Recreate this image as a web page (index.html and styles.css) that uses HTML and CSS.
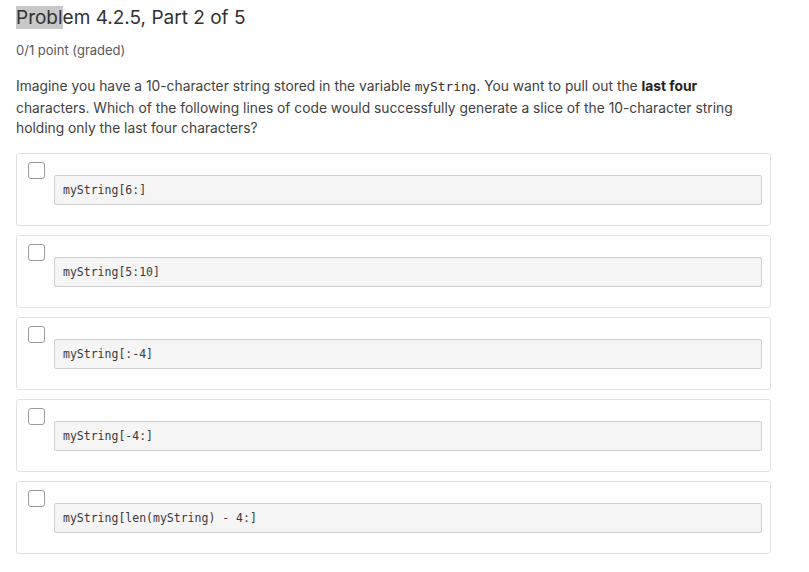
FILE: index.html
```html
<!DOCTYPE html>
<html>
<head>
<meta charset="utf-8">
<link rel="stylesheet" href="styles.css">
</head>
<body>
<div class="problem">
  <h3 class="title"><span class="sel">Probl</span>em 4.2.5, Part 2 of 5</h3>
  <div class="points">0/1 point (graded)</div>
  <p class="prompt">Imagine you have a 10-character string stored in the variable <code>myString</code>. You want to pull out the <strong>last four</strong> characters. Which of the following lines of code would successfully generate a slice of the 10-character string holding only the last four characters?</p>
  <div class="options">
    <label class="option"><span class="box"></span><pre class="code">myString[6:]</pre></label>
    <label class="option"><span class="box"></span><pre class="code">myString[5:10]</pre></label>
    <label class="option"><span class="box"></span><pre class="code">myString[:-4]</pre></label>
    <label class="option"><span class="box"></span><pre class="code">myString[-4:]</pre></label>
    <label class="option"><span class="box"></span><pre class="code">myString[len(myString) - 4:]</pre></label>
  </div>
</div>
</body>
</html>
```
FILE: styles.css
```css
html, body { margin: 0; padding: 0; background: #fff; }
body { font-family: Inter, "Noto Sans", sans-serif; color: #414141; }
.problem { padding: 4px 38px 0 16px; }
.title { margin: 0; font-size: 19px; font-weight: 400; line-height: 27px; color: #313131; }
.sel { background: #c8c8c8; }
.points { margin-top: 10px; font-size: 13px; color: #5a5a5a; line-height: 18px; }
.prompt { margin: 17px 0 0; font-size: 13.8px; line-height: 20.5px; color: #414141; }
.prompt code { font-family: "DejaVu Sans Mono", monospace; font-size: 12.8px; color: #313131; }
.prompt strong { font-weight: 700; color: #222; }
.options { margin-top: 14px; display: flex; flex-direction: column; gap: 9px; }
.option { display: flex; align-items: flex-start; border: 1px solid #e2e2e2; border-radius: 3px; box-sizing: border-box; height: 73px; padding: 8px 8px 0 11px; }
.box { width: 15px; height: 15px; border: 1px solid #9a9a9a; border-radius: 3px; flex: none; background: #fff; }
.code { flex: 1; margin: 13px 0 0 9px; height: 30px; box-sizing: border-box; background: #f5f5f5; border: 1px solid #cfcfcf; border-radius: 2px; padding: 0 8px; font-family: "DejaVu Sans Mono", monospace; font-size: 11.5px; line-height: 28px; color: #3a3a3a; }
```
